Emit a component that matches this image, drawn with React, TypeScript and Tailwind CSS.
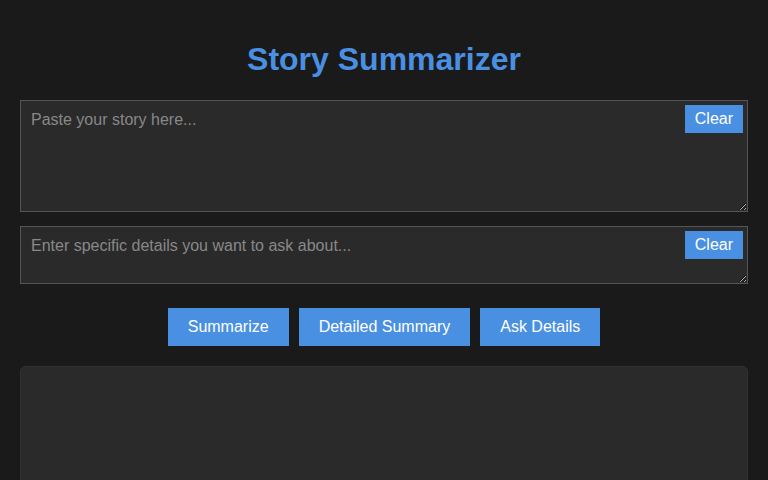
import React, { useState } from "react";

const font = { fontFamily: '"Liberation Sans", Arial, sans-serif' };

function ClearableField({
  value,
  onChange,
  placeholder,
  heightClass,
}: {
  value: string;
  onChange: (v: string) => void;
  placeholder: string;
  heightClass: string;
}) {
  return (
    <div className="relative">
      <textarea
        value={value}
        onChange={(e) => onChange(e.target.value)}
        placeholder={placeholder}
        className={`block w-full ${heightClass} p-[10px] bg-[#2a2a2a] border border-[#555] text-[16px] leading-[18px] text-white placeholder:text-[#888] outline-none`}
      />
      <button
        onClick={() => onChange("")}
        className="absolute top-[5px] right-[5px] bg-[#4a90e2] text-white text-[16px] leading-[18px] px-[10px] py-[5px]"
      >
        Clear
      </button>
    </div>
  );
}

export default function App() {
  const [story, setStory] = useState("");
  const [question, setQuestion] = useState("");

  return (
    <div className="min-h-screen bg-[#1a1a1a] text-white px-5 pt-5" style={font}>
      <h1 className="text-[32px] leading-[37px] font-bold text-center text-[#4a90e2] mt-[21px] mb-[22px]">
        Story Summarizer
      </h1>

      <ClearableField
        value={story}
        onChange={setStory}
        placeholder="Paste your story here..."
        heightClass="h-[112px]"
      />
      <div className="mt-[14px]">
        <ClearableField
          value={question}
          onChange={setQuestion}
          placeholder="Enter specific details you want to ask about..."
          heightClass="h-[58px]"
        />
      </div>

      {/* Actions */}
      <div className="flex justify-center gap-[10px] mt-[24px]">
        <button className="bg-[#4a90e2] text-white text-[16px] leading-[18px] px-5 py-[10px]">Summarize</button>
        <button className="bg-[#4a90e2] text-white text-[16px] leading-[18px] px-5 py-[10px]">Detailed Summary</button>
        <button className="bg-[#4a90e2] text-white text-[16px] leading-[18px] px-5 py-[10px]">Ask Details</button>
      </div>

      {/* Output */}
      <div className="mt-5 h-[200px] bg-[#2a2a2a] rounded-[5px] border border-[#303030]"></div>
    </div>
  );
}
